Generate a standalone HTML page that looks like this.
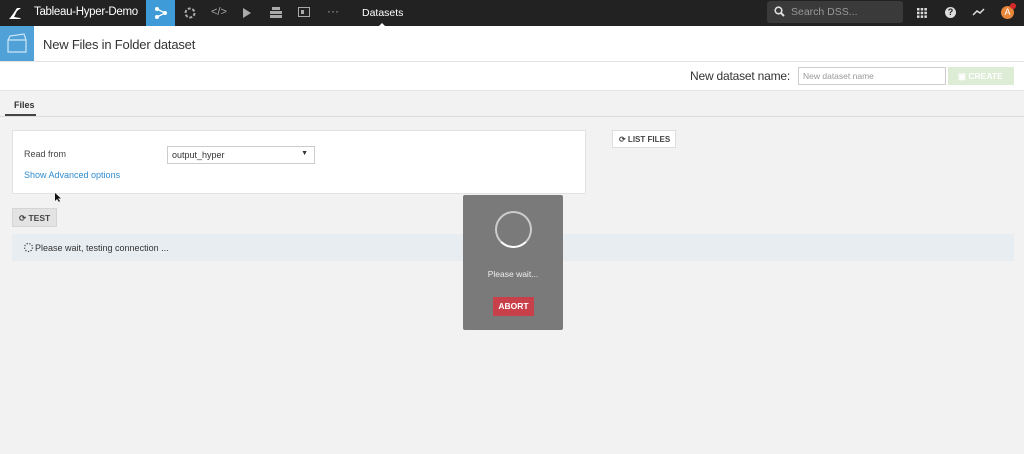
<!DOCTYPE html>
<html><head><style>
*{box-sizing:border-box;margin:0;padding:0}
body{width:1024px;height:454px;overflow:hidden;background:#f2f2f2;font-family:"Liberation Sans",sans-serif;position:relative;color:#333}
.abs{position:absolute;white-space:nowrap}
</style></head><body>
<div class="abs" style="left:0;top:0;width:1024px;height:26px;background:#222"></div>
<svg class="abs" style="left:8px;top:6px" width="14" height="14" viewBox="0 0 14 14"><path d="M1 13 L13 13 L12 12 L6 11 L9 5 L13 2 L9 2 L5 8 L2 12Z" fill="#fff"/></svg>
<div class="abs" style="left:34px;top:6px;font-size:11.5px;letter-spacing:-0.3px;color:#fff">Tableau-Hyper-Demo</div>
<div class="abs" style="left:146px;top:0;width:29px;height:26px;background:#3e9bd8"></div>
<svg class="abs" style="left:154px;top:6px" width="14" height="14" viewBox="0 0 14 14"><circle cx="3" cy="3" r="2" fill="#fff"/><circle cx="3" cy="11" r="2" fill="#fff"/><circle cx="11" cy="7" r="2" fill="#fff"/><path d="M3 3L11 7L3 11" stroke="#fff" fill="none" stroke-width="1.3"/></svg>
<svg class="abs" style="left:184px;top:7px" width="12" height="12"><circle cx="6" cy="6" r="4.5" stroke="#aaa" stroke-width="2" fill="none" stroke-dasharray="3 1.7"/></svg>
<div class="abs" style="left:211px;top:6px;font-size:11px;color:#aaa">&lt;/&gt;</div>
<svg class="abs" style="left:242px;top:7px" width="10" height="12"><path d="M1 1L9 6L1 11Z" fill="#aaa"/></svg>
<svg class="abs" style="left:270px;top:6px" width="12" height="13"><rect x="2" y="1" width="8" height="3" fill="#aaa"/><rect x="0" y="5" width="12" height="3" fill="#aaa"/><rect x="0" y="9" width="12" height="3" fill="#aaa"/></svg>
<svg class="abs" style="left:298px;top:7px" width="12" height="11"><rect x="0.5" y="0.5" width="11" height="9" stroke="#aaa" fill="none"/><rect x="3" y="3" width="3" height="4" fill="#aaa"/></svg>
<div class="abs" style="left:327px;top:4px;font-size:12px;color:#aaa">···</div>
<div class="abs" style="left:362px;top:7px;font-size:10.5px;color:#fff">Datasets</div>
<div class="abs" style="left:379px;top:20px;border:3px solid transparent;border-bottom-color:#fff;width:0;height:0"></div>
<div class="abs" style="left:767px;top:1px;width:136px;height:22px;background:#3a3a3a;border-radius:3px"></div>
<svg class="abs" style="left:774px;top:6px" width="11" height="11"><circle cx="4.5" cy="4.5" r="3.3" stroke="#ddd" stroke-width="1.6" fill="none"/><path d="M7 7L10 10" stroke="#ddd" stroke-width="2"/></svg>
<div class="abs" style="left:791px;top:6px;font-size:10.5px;color:#999">Search DSS...</div>
<svg class="abs" style="left:917px;top:8px" width="10" height="10"><g fill="#ddd"><rect x="0" y="0" width="2.5" height="2.5"/><rect x="3.7" y="0" width="2.5" height="2.5"/><rect x="7.4" y="0" width="2.5" height="2.5"/><rect x="0" y="3.7" width="2.5" height="2.5"/><rect x="3.7" y="3.7" width="2.5" height="2.5"/><rect x="7.4" y="3.7" width="2.5" height="2.5"/><rect x="0" y="7.4" width="2.5" height="2.5"/><rect x="3.7" y="7.4" width="2.5" height="2.5"/><rect x="7.4" y="7.4" width="2.5" height="2.5"/></g></svg>
<div class="abs" style="left:945px;top:7px;width:11px;height:11px;border-radius:50%;background:#ddd;color:#222;font-size:9px;font-weight:bold;text-align:center;line-height:11px">?</div>
<svg class="abs" style="left:972px;top:7px" width="13" height="10"><path d="M1 8L5 4L8 6L12 2" stroke="#ddd" stroke-width="1.5" fill="none"/></svg>
<div class="abs" style="left:1001px;top:6px;width:13px;height:13px;border-radius:50%;background:#e8873a;color:#fff;font-size:9px;text-align:center;line-height:13px">A</div>
<div class="abs" style="left:1010px;top:3px;width:6px;height:6px;border-radius:50%;background:#d62a2a"></div>

<div class="abs" style="left:0;top:26px;width:1024px;height:65px;background:#fff"></div>
<div class="abs" style="left:0;top:26px;width:34px;height:35px;background:#4fa1d8"></div>
<svg class="abs" style="left:6px;top:32px" width="22" height="22"><path d="M2 8 L2 20 L20 20 L20 8Z M2 8 L4 4 L18 2 L20 8" stroke="#cfe5f5" fill="none" stroke-width="1.2"/></svg>
<div class="abs" style="left:43px;top:37px;font-size:13px;letter-spacing:-0.2px;color:#333">New Files in Folder dataset</div>
<div class="abs" style="left:0;top:61px;width:1024px;height:1px;background:#e3e3e3"></div>
<div class="abs" style="left:680px;width:110px;text-align:right;top:69px;font-size:12px;letter-spacing:-0.2px;color:#333">New dataset name:</div>
<div class="abs" style="left:798px;top:67px;width:148px;height:18px;border:1px solid #ccc;font-size:8.5px;color:#999;padding:3px 4px">New dataset name</div>
<div class="abs" style="left:948px;top:67px;width:66px;height:18px;background:#dcecd5;color:#fff;font-size:8.5px;font-weight:bold;padding:4px 0 0 10px">▣ CREATE</div>
<div class="abs" style="left:0;top:90px;width:1024px;height:1px;background:#e3e3e3"></div>

<div class="abs" style="left:14px;top:100px;font-size:9px;font-weight:bold;color:#333">Files</div>
<div class="abs" style="left:0;top:116px;width:1024px;height:1px;background:#ddd"></div>
<div class="abs" style="left:5px;top:114px;width:31px;height:2px;background:#444"></div>

<div class="abs" style="left:12px;top:130px;width:574px;height:64px;background:#fff;border:1px solid #e2e2e2"></div>
<div class="abs" style="left:24px;top:149px;font-size:9px;color:#444">Read from</div>
<div class="abs" style="left:167px;top:146px;width:148px;height:18px;border:1px solid #ccc;background:#fff;font-size:9px;padding:3px 4px">output_hyper<span style="position:absolute;right:6px;top:3px;font-size:7px">▼</span></div>
<div class="abs" style="left:24px;top:170px;font-size:9px;color:#2f8cd0">Show Advanced options</div>
<svg class="abs" style="left:54px;top:192px" width="8" height="11"><path d="M1 1L1 9L3 7L5 10L6 9L4 6.5L7 6.5Z" fill="#111"/></svg>

<div class="abs" style="left:612px;top:130px;width:64px;height:18px;background:#fff;border:1px solid #ddd;font-size:8px;font-weight:bold;color:#444;padding:4px 0 0 6px">⟳ LIST FILES</div>

<div class="abs" style="left:12px;top:208px;width:45px;height:19px;background:#e3e3e3;border:1px solid #d5d5d5;font-size:8.5px;font-weight:bold;color:#444;padding:4px 0 0 6px">⟳ TEST</div>
<div class="abs" style="left:12px;top:234px;width:1002px;height:27px;background:#e8edf1"></div>
<svg class="abs" style="left:23px;top:242px" width="11" height="11"><circle cx="5.5" cy="5.5" r="4" stroke="#444" stroke-width="1.3" fill="none" stroke-dasharray="1.2 1.6"/></svg>
<div class="abs" style="left:35px;top:243px;font-size:9px;color:#333">Please wait, testing connection ...</div>

<div class="abs" style="left:463px;top:195px;width:100px;height:135px;background:#7a7a7a;border-radius:2px"></div>
<div class="abs" style="left:495px;top:211px;width:37px;height:37px;border-radius:50%;border:2px solid #ccc;border-bottom-color:#fff"></div>
<div class="abs" style="left:463px;top:269px;width:100px;text-align:center;font-size:8.5px;color:#eee">Please wait...</div>
<div class="abs" style="left:493px;top:297px;width:41px;height:19px;background:#c8404a;color:#fff;font-size:8.5px;font-weight:bold;text-align:center;line-height:19px">ABORT</div>
</body></html>
